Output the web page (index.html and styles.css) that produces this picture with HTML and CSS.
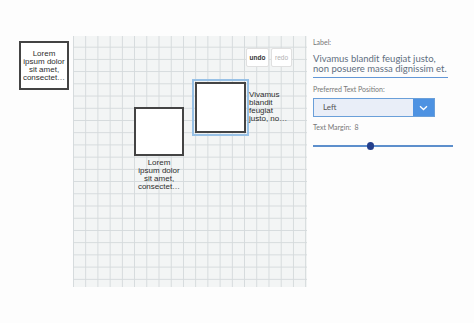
FILE: index.html
```html
<!DOCTYPE html>
<html>
<head>
<meta charset="utf-8">
<link rel="stylesheet" href="styles.css">
</head>
<body>
<div class="palette">
  <div class="card"><span class="node-text center">Lorem<br>ipsum dolor<br>sit amet,<br>consectet…</span></div>
</div>
<div class="canvas">
  <div class="toolbar">
    <button class="btn undo">undo</button>
    <button class="btn redo">redo</button>
  </div>
  <div class="node node-a"></div>
  <div class="node-text center label-a">Lorem<br>ipsum dolor<br>sit amet,<br>consectet…</div>
  <div class="node node-b selected"></div>
  <div class="node-text label-b">Vivamus<br>blandit<br>feugiat<br>justo, no…</div>
</div>
<div class="panel">
  <div class="field-label">Label:</div>
  <div class="label-input">Vivamus blandit feugiat justo,<br>non posuere massa dignissim et.</div>
  <div class="field-label pos-label">Preferred Text Position:</div>
  <div class="select">
    <span class="select-value">Left</span>
    <span class="select-btn"><svg width="9" height="6" viewBox="0 0 9 6"><path d="M1 1.2 L4.5 4.5 L8 1.2" fill="none" stroke="#fff" stroke-width="1.3"/></svg></span>
  </div>
  <div class="field-label margin-label">Text Margin:&nbsp; 8</div>
  <div class="slider"><span class="thumb"></span></div>
</div>
</body>
</html>
```
FILE: styles.css
```css
html, body {
  margin: 0;
  padding: 0;
}
body {
  width: 474px;
  height: 323px;
  background: #fdfdfd;
  display: flex;
  align-items: flex-start;
  overflow: hidden;
}
.palette {
  width: 73px;
  flex: none;
  box-sizing: border-box;
  padding: 41px 0 0 19px;
}
.card {
  width: 50px;
  height: 49px;
  box-sizing: border-box;
  border: 2px solid #444;
  background: #fff;
  display: flex;
  align-items: center;
  justify-content: center;
}
.node-text {
  font-family: "Liberation Sans", Arial, sans-serif;
  font-size: 8px;
  line-height: 8px;
  color: #2e2e2e;
  white-space: nowrap;
}
.center {
  text-align: center;
}
.canvas {
  position: relative;
  flex: none;
  margin-top: 36px;
  width: 234px;
  height: 251px;
  background-color: #f3f5f5;
  background-image:
    linear-gradient(to right, #d5dadc 1px, transparent 1px),
    linear-gradient(to bottom, #d5dadc 1px, transparent 1px);
  background-size: 12.23px 12.23px;
  background-position: 0 10.7px;
}
.toolbar {
  position: absolute;
  left: 173px;
  top: 12px;
  display: flex;
  gap: 2px;
}
.btn {
  margin: 0;
  padding: 0;
  height: 19px;
  background: #fff;
  border: 1px solid #e0e0e0;
  border-radius: 2px;
  font-family: "Liberation Sans", Arial, sans-serif;
  font-size: 6.5px;
  font-weight: bold;
}
.undo {
  width: 23px;
  color: #333;
}
.redo {
  width: 21px;
  color: #b0b0b0;
  font-weight: normal;
}
.node {
  position: absolute;
  box-sizing: border-box;
  border: 2px solid #444;
  background: #fff;
}
.node-a {
  left: 61px;
  top: 71px;
  width: 50px;
  height: 49px;
}
.label-a {
  position: absolute;
  left: 61px;
  width: 50px;
  top: 123px;
}
.node-b {
  left: 122px;
  top: 46px;
  width: 51px;
  height: 51px;
}
.selected {
  outline: 2px solid #98c1e6;
  outline-offset: 1px;
}
.label-b {
  position: absolute;
  left: 176px;
  top: 55px;
}
.panel {
  flex: 1;
  box-sizing: border-box;
  padding: 38px 0 0 6px;
  font-family: Lato, "Open Sans", sans-serif;
}
.field-label {
  font-size: 7px;
  line-height: 9px;
  color: #777;
}
.label-input {
  margin-top: 7px;
  width: 135px;
  font-size: 9.5px;
  line-height: 10px;
  color: #5f6e80;
  padding-bottom: 3px;
  border-bottom: 1.5px solid #6397d6;
}
.pos-label {
  margin-top: 7px;
}
.select {
  margin-top: 4px;
  width: 122px;
  height: 19px;
  box-sizing: border-box;
  border: 1px solid #6a9fd9;
  background: #e9eef8;
  display: flex;
  align-items: stretch;
}
.select-value {
  flex: 1;
  padding-left: 9px;
  font-size: 8px;
  line-height: 17px;
  color: #555;
}
.select-btn {
  width: 21px;
  background: #4d92e2;
  display: flex;
  align-items: center;
  justify-content: center;
}
.margin-label {
  margin-top: 6px;
}
.slider {
  position: relative;
  margin-top: 13px;
  width: 140px;
  height: 1.5px;
  background: #5d8fcc;
}
.thumb {
  position: absolute;
  left: 53.5px;
  top: -3px;
  width: 7.5px;
  height: 7.5px;
  border-radius: 50%;
  background: #243f8c;
}
```
